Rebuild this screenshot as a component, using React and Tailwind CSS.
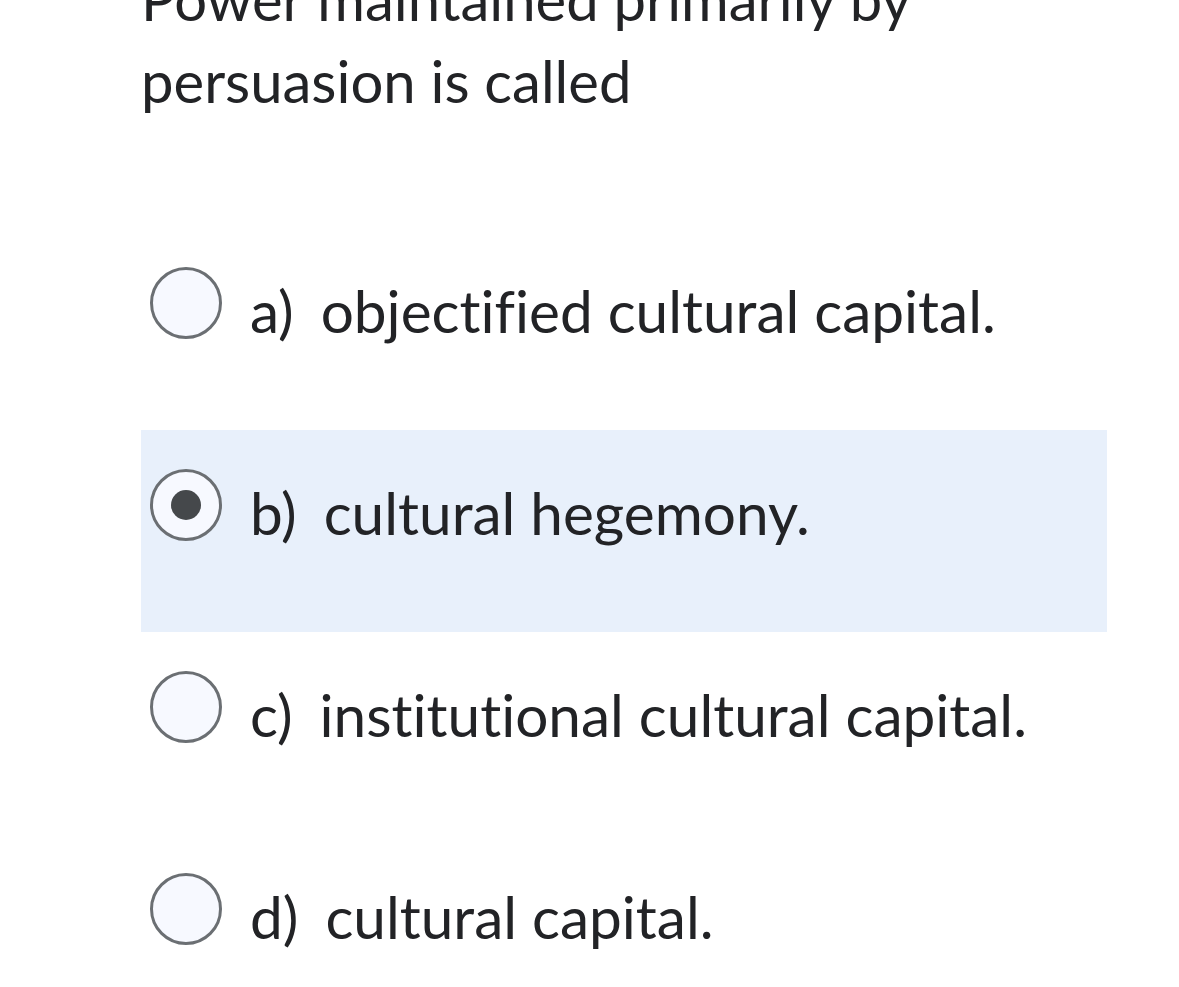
import React from "react";

const options = [
  { letter: "a)", text: "objectified cultural capital." },
  { letter: "b)", text: "cultural hegemony.", selected: true },
  { letter: "c)", text: "institutional cultural capital." },
  { letter: "d)", text: "cultural capital." },
];

const Radio = ({ selected }) => (
  <span className="flex h-[72px] w-[72px] shrink-0 items-center justify-center rounded-full border-[3px] border-[#6b6f73] bg-[#f7f9ff]">
    {selected && <span className="h-[30px] w-[30px] rounded-full bg-[#45484b]" />}
  </span>
);

export default function App() {
  return (
    <div
      className="h-[987px] overflow-hidden bg-white text-[#222326] [font-variant-ligatures:none]"
      style={{ fontFamily: "Lato, 'Open Sans', sans-serif" }}
    >
      <div className="ml-[141px] w-[966px]">
        <p className="-mt-[42px] text-[58px] leading-[82px]">
          Power maintained primarily by
          <br />
          persuasion is called
        </p>
        <div className="mt-[106px]">
          {options.map((o) => (
            <label
              key={o.letter}
              className={`flex h-[202px] items-start gap-[28px] pl-[9px] pt-[39px] ${
                o.selected ? "bg-[#e8f0fb]" : ""
              }`}
            >
              <Radio selected={o.selected} />
              <span className="flex gap-[27px] text-[58.5px] leading-[86px]">
                <span>{o.letter}</span>
                <span>{o.text}</span>
              </span>
            </label>
          ))}
        </div>
      </div>
    </div>
  );
}
